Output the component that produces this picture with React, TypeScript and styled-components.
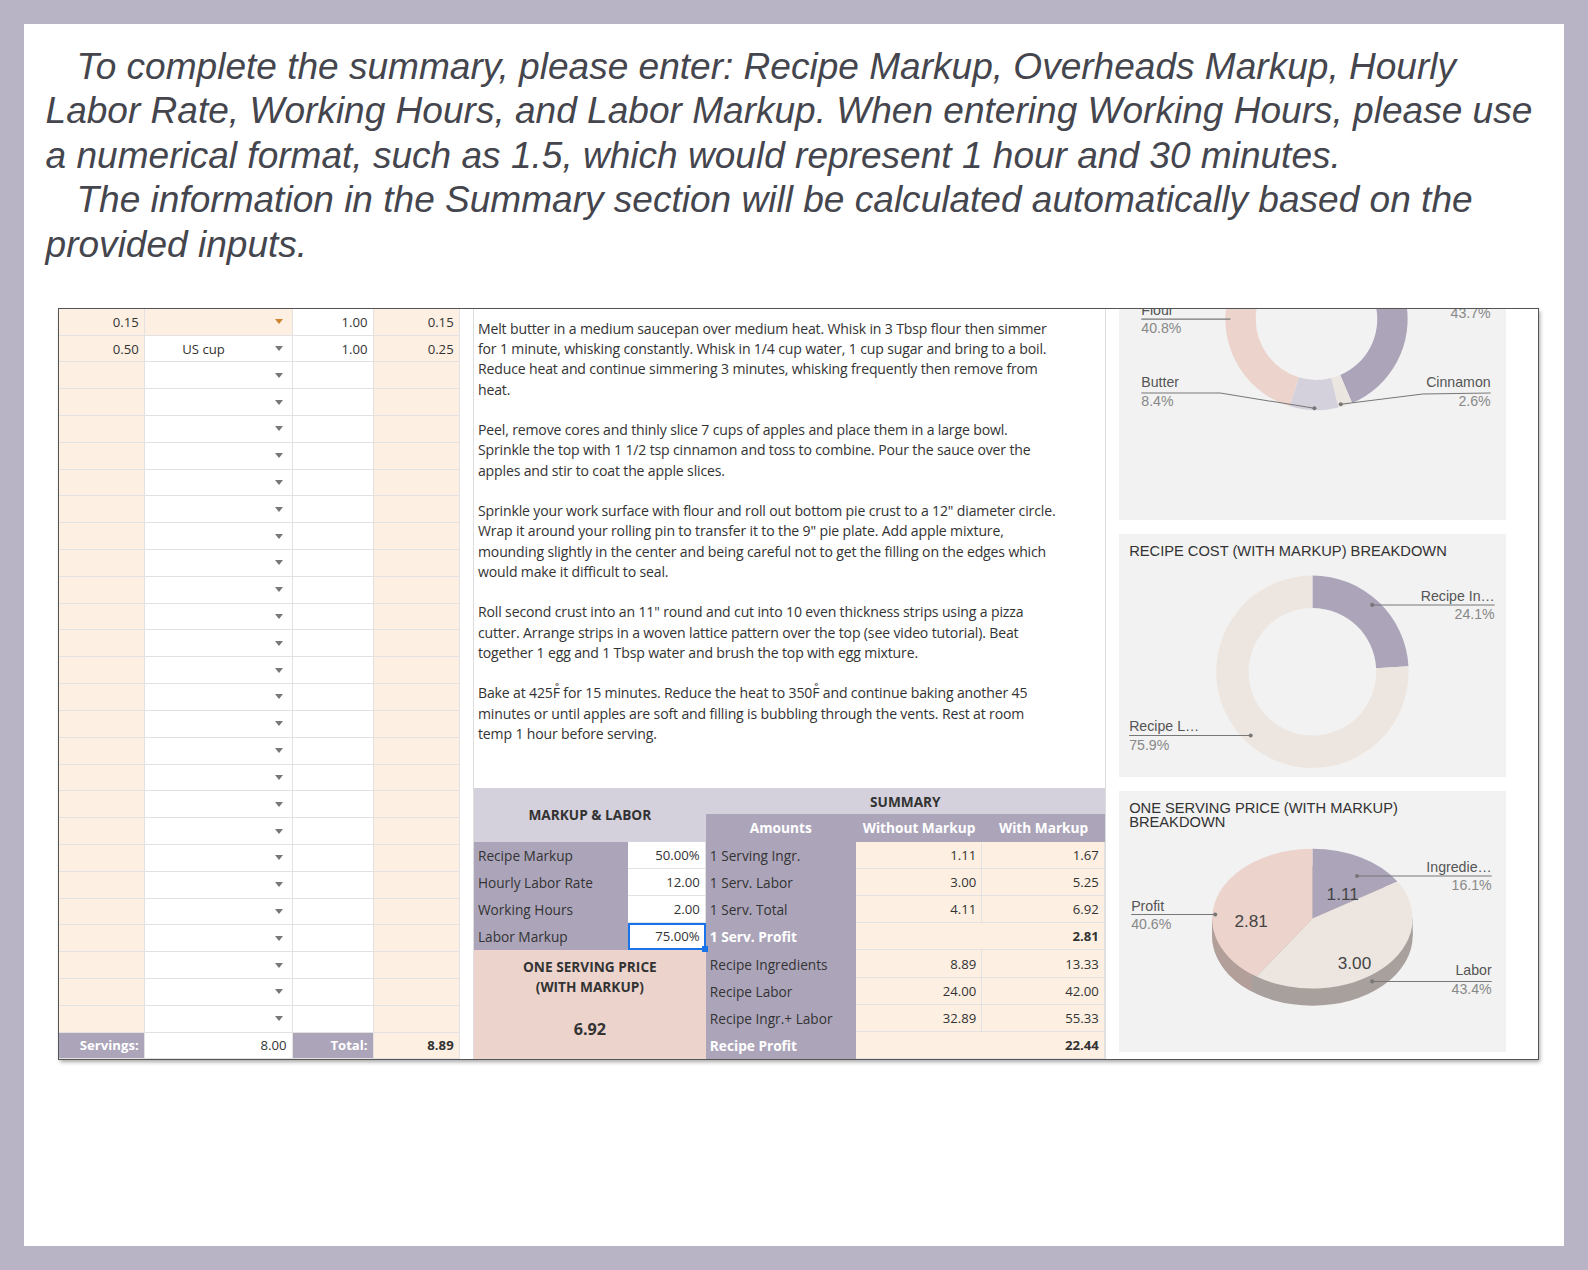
import React from "react";
import styled, { createGlobalStyle } from "styled-components";

const GlobalStyle = createGlobalStyle`
  html, body { margin: 0; padding: 0; background: #b9b3c6; }
`;

const Frame = styled.div`
  zoom: 1.01276;
  width: 1568px;
  height: 1254px;
  background: #b9b3c6;
  padding: 24px;
  box-sizing: border-box;
`;

const Panel = styled.div`
  background: #fff;
  height: 100%;
  padding: 19px 20px 0 21px;
  box-sizing: border-box;
`;

const Intro = styled.p`
  margin: 0;
  font-family: "Liberation Sans", Arial, sans-serif;
  font-style: italic;
  font-size: 36.6px;
  line-height: 44px;
  color: #44454d;
`;

const Sheet = styled.div`
  margin: 41px 0 0 12px;
  width: 1463px;
  height: 743px;
  border: 1px solid #555;
  box-shadow: 2px 3px 4px rgba(0, 0, 0, 0.35);
  display: grid;
  grid-template-columns: 396px 13px 625px 1fr;
  font-family: "Open Sans", Calibri, sans-serif;
  font-size: 13px;
  color: #333;
  background: #fff;
  overflow: hidden;
  box-sizing: border-box;
`;

const Ingredients = styled.div`
  display: grid;
  grid-template-columns: 85px 146px 80px 85px;
  grid-auto-rows: 1fr;
`;

const Cell = styled.div<{ $bg?: string; $align?: string; $bold?: boolean; $color?: string }>`
  background: ${(p) => p.$bg || "#fff"};
  border-right: 1px solid #e2e2e2;
  border-bottom: 1px solid #e2e2e2;
  display: flex;
  align-items: center;
  justify-content: ${(p) => p.$align || "flex-end"};
  padding: 0 5px;
  font-weight: ${(p) => (p.$bold ? 700 : 400)};
  color: ${(p) => p.$color || "#333"};
  white-space: nowrap;
  overflow: hidden;
`;

const Arrow = styled.span<{ $orange?: boolean }>`
  width: 0;
  height: 0;
  border-left: 4px solid transparent;
  border-right: 4px solid transparent;
  border-top: 5px solid ${(p) => (p.$orange ? "#d1842f" : "#777")};
  margin-left: auto;
  margin-right: 4px;
`;

const UnitText = styled.span`
  position: absolute;
  left: 37px;
`;

const DropCell = styled(Cell)`
  position: relative;
`;

const Middle = styled.div`
  display: flex;
  flex-direction: column;
  border-left: 1px solid #ddd;
  border-right: 1px solid #ddd;
`;

const Steps = styled.div`
  flex: 1;
  padding: 10px 0 0 4px;
  font-size: 13.9px;
  line-height: 20px;
  color: #333;
  white-space: pre-line;
  letter-spacing: -0.15px;
`;

const Para = styled.p`
  margin: 0 0 20px;
`;

const Tables = styled.div`
  height: 268px;
  display: grid;
  grid-template-columns: 152px 77px 148px 125px 1fr;
  grid-template-rows: 26px 27px repeat(8, 1fr);
`;

const Head = styled.div<{ $bg: string; $color?: string; $col: string; $row: string }>`
  grid-column: ${(p) => p.$col};
  grid-row: ${(p) => p.$row};
  background: ${(p) => p.$bg};
  color: ${(p) => p.$color || "#333"};
  font-weight: 700;
  font-size: 13.5px;
  display: flex;
  align-items: center;
  justify-content: center;
  text-align: center;
`;

const Label = styled(Cell)`
  background: #aca5ba;
  justify-content: flex-start;
  padding-left: 4px;
  border-right: none;
  border-bottom: none;
  font-size: 13.5px;
`;

const PriceBox = styled.div`
  grid-column: 1 / 3;
  grid-row: 7 / 11;
  background: #ecd3cc;
  display: flex;
  flex-direction: column;
  align-items: center;
  padding-top: 6px;
  font-weight: 700;
  font-size: 13.5px;
  line-height: 20px;
  text-align: center;
`;

const Price = styled.div`
  font-size: 16px;
  margin-top: 22px;
`;

const Charts = styled.div`
  display: flex;
  flex-direction: column;
  gap: 14px;
  padding: 0 32px 3px 13px;
`;

const ChartCard = styled.div<{ $h: number }>`
  height: ${(p) => p.$h}px;
  background: #f2f2f2;
  position: relative;
  overflow: hidden;
  font-family: "Liberation Sans", Arial, sans-serif;
`;

const ChartTitle = styled.div`
  position: absolute;
  left: 10px;
  top: 10px;
  font-size: 14.5px;
  line-height: 14px;
  color: #333;
`;

const PEACH = "#fdf0e2";
const PURPLE = "#aca5ba";

function arc(cx: number, cy: number, r: number, r0: number, a1: number, a2: number) {
  const p = (rr: number, a: number) => {
    const t = (a * Math.PI) / 180;
    return [cx + rr * Math.sin(t), cy - rr * Math.cos(t)];
  };
  const large = a2 - a1 > 180 ? 1 : 0;
  const [x1, y1] = p(r, a1);
  const [x2, y2] = p(r, a2);
  const [x3, y3] = p(r0, a2);
  const [x4, y4] = p(r0, a1);
  return `M${x1} ${y1} A${r} ${r} 0 ${large} 1 ${x2} ${y2} L${x3} ${y3} A${r0} ${r0} 0 ${large} 0 ${x4} ${y4} Z`;
}

function ell(cx: number, cy: number, rx: number, ry: number, a1: number, a2: number) {
  const p = (a: number) => {
    const t = (a * Math.PI) / 180;
    return [cx + rx * Math.sin(t), cy - ry * Math.cos(t)];
  };
  const [x1, y1] = p(a1);
  const [x2, y2] = p(a2);
  return `M${cx} ${cy} L${x1} ${y1} A${rx} ${ry} 0 ${a2 - a1 > 180 ? 1 : 0} 1 ${x2} ${y2} Z`;
}

const lbl = { fontFamily: "Liberation Sans, Arial, sans-serif", fontSize: 14 };

const IngredientChart = () => (
  <svg width="382" height="208" viewBox="0 0 382 208">
    <path d={arc(195, 10, 90, 60, 0, 157)} fill={PURPLE} />
    <path d={arc(195, 10, 90, 60, 157, 166)} fill="#ece6e0" />
    <path d={arc(195, 10, 90, 60, 166, 197)} fill="#d4d1dc" />
    <path d={arc(195, 10, 90, 60, 197, 344)} fill="#ecd3cc" />
    <path d={arc(195, 10, 90, 60, 344, 360)} fill="#e8e0d8" />
    <text x="22" y="6" fill="#555" {...lbl}>Flour</text>
    <text x="22" y="24" fill="#888" {...lbl}>40.8%</text>
    <line x1="22" y1="10" x2="110" y2="10" stroke="#777" />
    <text x="367" y="9" fill="#888" textAnchor="end" {...lbl}>43.7%</text>
    <text x="22" y="77" fill="#555" {...lbl}>Butter</text>
    <text x="22" y="96" fill="#888" {...lbl}>8.4%</text>
    <polyline points="22,83 100,83 193,98" fill="none" stroke="#777" />
    <circle cx="193" cy="98" r="2" fill="#777" />
    <text x="367" y="77" fill="#555" textAnchor="end" {...lbl}>Cinnamon</text>
    <text x="367" y="96" fill="#888" textAnchor="end" {...lbl}>2.6%</text>
    <polyline points="367,83 300,84 219,94" fill="none" stroke="#777" />
    <circle cx="219" cy="94" r="2" fill="#777" />
  </svg>
);

const CostChart = () => (
  <svg width="382" height="240" viewBox="0 0 382 240" style={{ position: "absolute", left: 0, top: 0 }}>
    <path d={arc(191, 136, 95, 63, 0, 86.8)} fill={PURPLE} />
    <path d={arc(191, 136, 95, 63, 86.8, 360)} fill="#ede6e0" />
    <text x="371" y="66" fill="#555" textAnchor="end" {...lbl}>Recipe In…</text>
    <text x="371" y="84" fill="#888" textAnchor="end" {...lbl}>24.1%</text>
    <line x1="250" y1="70" x2="371" y2="70" stroke="#777" />
    <circle cx="250" cy="70" r="2" fill="#777" />
    <text x="10" y="195" fill="#555" {...lbl}>Recipe L…</text>
    <text x="10" y="213" fill="#888" {...lbl}>75.9%</text>
    <line x1="10" y1="199" x2="130" y2="199" stroke="#777" />
    <circle cx="130" cy="199" r="2" fill="#777" />
  </svg>
);

const ServingChart = () => {
  const cx = 191, cy = 126, rx = 99, ry = 69, d = 17;
  return (
    <svg width="382" height="258" viewBox="0 0 382 258" style={{ position: "absolute", left: 0, top: 0 }}>
      <ellipse cx={cx} cy={cy + d} rx={rx} ry={ry} fill="#a8a09c" />
      <rect x={cx - rx} y={cy} width={rx * 2} height={d} fill="#a8a09c" />
      <path d={`M${cx - rx} ${cy} L${cx - rx} ${cy + d} A${rx} ${ry} 0 0 0 ${cx - 60} ${cy + ry - 14 + d} L${cx - 60} ${cy + ry - 14} Z`} fill="#b39f9a" />
      <path d={ell(cx, cy, rx, ry, 0, 58)} fill={PURPLE} />
      <path d={ell(cx, cy, rx, ry, 58, 214)} fill="#ede6e0" />
      <path d={ell(cx, cy, rx, ry, 214, 360)} fill="#ecd3cc" />
      <text x="205" y="108" fill="#444" fontSize="17" fontFamily="Liberation Sans, Arial, sans-serif">1.11</text>
      <text x="114" y="134" fill="#444" fontSize="17" fontFamily="Liberation Sans, Arial, sans-serif">2.81</text>
      <text x="216" y="176" fill="#444" fontSize="17" fontFamily="Liberation Sans, Arial, sans-serif">3.00</text>
      <text x="368" y="80" fill="#555" textAnchor="end" {...lbl}>Ingredie…</text>
      <text x="368" y="98" fill="#888" textAnchor="end" {...lbl}>16.1%</text>
      <line x1="235" y1="84" x2="368" y2="84" stroke="#777" />
      <circle cx="235" cy="84" r="2" fill="#777" />
      <text x="12" y="118" fill="#555" {...lbl}>Profit</text>
      <text x="12" y="136" fill="#888" {...lbl}>40.6%</text>
      <line x1="12" y1="122" x2="95" y2="122" stroke="#777" />
      <circle cx="95" cy="122" r="2" fill="#777" />
      <text x="368" y="182" fill="#555" textAnchor="end" {...lbl}>Labor</text>
      <text x="368" y="200" fill="#888" textAnchor="end" {...lbl}>43.4%</text>
      <line x1="250" y1="188" x2="368" y2="188" stroke="#777" />
      <circle cx="250" cy="188" r="2" fill="#777" />
    </svg>
  );
};

const steps = [
  "Melt butter in a medium saucepan over medium heat. Whisk in 3 Tbsp flour then simmer\nfor 1 minute, whisking constantly. Whisk in 1/4 cup water, 1 cup sugar and bring to a boil.\nReduce heat and continue simmering 3 minutes, whisking frequently then remove from\nheat.",
  "Peel, remove cores and thinly slice 7 cups of apples and place them in a large bowl.\nSprinkle the top with 1 1/2 tsp cinnamon and toss to combine. Pour the sauce over the\napples and stir to coat the apple slices.",
  "Sprinkle your work surface with flour and roll out bottom pie crust to a 12\" diameter circle.\nWrap it around your rolling pin to transfer it to the 9\" pie plate. Add apple mixture,\nmounding slightly in the center and being careful not to get the filling on the edges which\nwould make it difficult to seal.",
  "Roll second crust into an 11\" round and cut into 10 even thickness strips using a pizza\ncutter. Arrange strips in a woven lattice pattern over the top (see video tutorial). Beat\ntogether 1 egg and 1 Tbsp water and brush the top with egg mixture.",
  "Bake at 425F̊ for 15 minutes. Reduce the heat to 350F̊ and continue baking another 45\nminutes or until apples are soft and filling is bubbling through the vents. Rest at room\ntemp 1 hour before serving.",
];

const markup = [
  ["Recipe Markup", "50.00%", "1 Serving Ingr.", "1.11", "1.67"],
  ["Hourly Labor Rate", "12.00", "1 Serv. Labor", "3.00", "5.25"],
  ["Working Hours", "2.00", "1 Serv. Total", "4.11", "6.92"],
  ["Labor Markup", "75.00%", "1 Serv. Profit", "", "2.81"],
];
const recipe = [
  ["Recipe Ingredients", "8.89", "13.33"],
  ["Recipe Labor", "24.00", "42.00"],
  ["Recipe Ingr.+ Labor", "32.89", "55.33"],
  ["Recipe Profit", "", "22.44"],
];

const SelectedCell = styled(Cell)`
  outline: 2px solid #1a73e8;
  outline-offset: -2px;
  position: relative;
  overflow: visible;
  &::after {
    content: "";
    position: absolute;
    right: -3px;
    bottom: -3px;
    width: 6px;
    height: 6px;
    background: #1a73e8;
  }
`;

export default function App() {
  const emptyRows = Array.from({ length: 25 });
  return (
    <Frame>
      <GlobalStyle />
      <Panel>
        <Intro>
          &nbsp;&nbsp;&nbsp;To complete the summary, please enter: Recipe Markup, Overheads Markup, Hourly
          <br />
          Labor Rate, Working Hours, and Labor Markup. When entering Working Hours, please use
          <br />
          a numerical format, such as 1.5, which would represent 1 hour and 30 minutes.
          <br />
          &nbsp;&nbsp;&nbsp;The information in the Summary section will be calculated automatically based on the
          <br />
          provided inputs.
        </Intro>
        <Sheet>
          <Ingredients>
            <Cell $bg={PEACH}>0.15</Cell>
            <DropCell $bg={PEACH}><Arrow $orange /></DropCell>
            <Cell>1.00</Cell>
            <Cell $bg={PEACH}>0.15</Cell>
            <Cell $bg={PEACH}>0.50</Cell>
            <DropCell><UnitText>US cup</UnitText><Arrow /></DropCell>
            <Cell>1.00</Cell>
            <Cell $bg={PEACH}>0.25</Cell>
            {emptyRows.map((_, i) => (
              <React.Fragment key={i}>
                <Cell $bg={PEACH} />
                <DropCell><Arrow /></DropCell>
                <Cell />
                <Cell $bg={PEACH} />
              </React.Fragment>
            ))}
            <Cell $bg={PURPLE} $bold $color="#fff">Servings:</Cell>
            <Cell>8.00</Cell>
            <Cell $bg={PURPLE} $bold $color="#fff">Total:</Cell>
            <Cell $bg={PEACH} $bold>8.89</Cell>
          </Ingredients>
          <div />
          <Middle>
            <Steps>
              {steps.map((s, i) => (
                <Para key={i}>{s}</Para>
              ))}
            </Steps>
            <Tables>
              <Head $bg="#d4d1dc" $col="1 / 3" $row="1 / 3">MARKUP &amp; LABOR</Head>
              <Head $bg="#d4d1dc" $col="3 / 6" $row="1">SUMMARY</Head>
              <Head $bg={PURPLE} $color="#fff" $col="3" $row="2">Amounts</Head>
              <Head $bg={PURPLE} $color="#fff" $col="4" $row="2">Without Markup</Head>
              <Head $bg={PURPLE} $color="#fff" $col="5" $row="2">With Markup</Head>
              {markup.map(([l, v, a, w, m], i) => {
                const profit = i === 3;
                const V = profit ? SelectedCell : Cell;
                return (
                  <React.Fragment key={l}>
                    <Label>{l}</Label>
                    <V>{v}</V>
                    <Label $bold={profit} $color={profit ? "#fff" : "#333"}>{a}</Label>
                    {profit ? (
                      <Cell $bg={PEACH} $bold style={{ gridColumn: "4 / 6" }}>{m}</Cell>
                    ) : (
                      <>
                        <Cell $bg={PEACH}>{w}</Cell>
                        <Cell $bg={PEACH}>{m}</Cell>
                      </>
                    )}
                  </React.Fragment>
                );
              })}
              <PriceBox>
                ONE SERVING PRICE
                <br />
                (WITH MARKUP)
                <Price>6.92</Price>
              </PriceBox>
              {recipe.map(([a, w, m], i) => {
                const profit = i === 3;
                return (
                  <React.Fragment key={a}>
                    <Label style={{ gridColumn: 3 }} $bold={profit} $color={profit ? "#fff" : "#333"}>{a}</Label>
                    {profit ? (
                      <Cell $bg={PEACH} $bold style={{ gridColumn: "4 / 6" }}>{m}</Cell>
                    ) : (
                      <>
                        <Cell $bg={PEACH}>{w}</Cell>
                        <Cell $bg={PEACH}>{m}</Cell>
                      </>
                    )}
                  </React.Fragment>
                );
              })}
            </Tables>
          </Middle>
          <Charts>
            <ChartCard $h={208}>
              <IngredientChart />
            </ChartCard>
            <ChartCard $h={240}>
              <CostChart />
              <ChartTitle>RECIPE COST (WITH MARKUP) BREAKDOWN</ChartTitle>
            </ChartCard>
            <ChartCard $h={258}>
              <ServingChart />
              <ChartTitle>
                ONE SERVING PRICE (WITH MARKUP)
                <br />
                BREAKDOWN
              </ChartTitle>
            </ChartCard>
          </Charts>
        </Sheet>
      </Panel>
    </Frame>
  );
}
